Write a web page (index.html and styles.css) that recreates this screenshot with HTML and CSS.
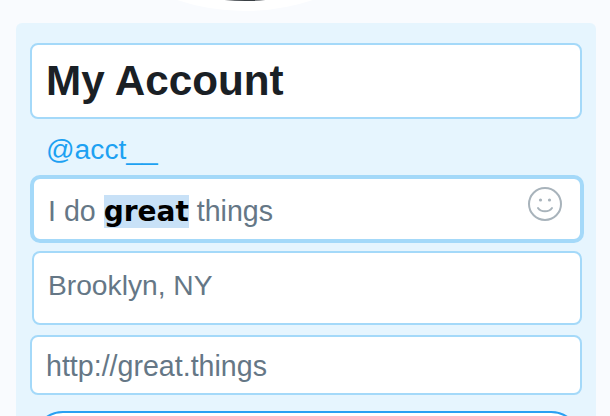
FILE: index.html
```html
<!DOCTYPE html>
<html lang="en">
<head>
  <meta charset="UTF-8">
  <meta name="viewport" content="width=device-width, initial-scale=1.0">
  <title>My Account</title>
  <link rel="stylesheet" href="styles.css">
</head>
<body>

<div class="avatar"></div>

<div class="panel">
  <div class="field title-field">My Account</div>
  <div class="handle">@acct__</div>
  <div class="field bio-field">
    <span>I do <span class="selected">great</span> things</span>
    <svg class="emoji" width="36" height="36" viewBox="0 0 36 36" fill="none" stroke="#a8b3bb" stroke-width="2">
      <circle cx="18" cy="18" r="16"></circle>
      <circle cx="13.5" cy="14" r="1.6" stroke="none" fill="#a8b3bb"></circle>
      <circle cx="22.5" cy="14" r="1.6" stroke="none" fill="#a8b3bb"></circle>
      <path d="M11 22c3 4.4 11 4.4 14 0" stroke-linecap="round"></path>
    </svg>
  </div>
  <div class="field location-field">Brooklyn, NY</div>
  <div class="field url-field">http://great.things</div>
  <button class="save-btn" type="button"></button>
</div>

</body>
</html>
```
FILE: styles.css
```css
html, body {
  height: 100%;
}
body {
  font-family: "Liberation Sans", Arial, sans-serif;
  font-size: 28px;
  background-color: #f9fbfe;
  margin: 0;
  padding: 0;
  overflow: hidden;
  position: relative;
}
.avatar {
  position: absolute;
  top: -419px;
  left: 30px;
  width: 430px;
  height: 430px;
  box-sizing: border-box;
  border: 10px solid #fff;
  border-radius: 50%;
  background-color: #3a3f44;
}
.panel {
  width: 552px;
  height: 373px;
  margin: 23px 0 0 16px;
  padding: 20px 14px 0;
  background-color: #e6f5fe;
  border-radius: 6px 6px 0 0;
}
.field {
  display: flex;
  align-items: center;
  box-sizing: border-box;
  background-color: #fff;
  border: 2px solid #a4d9f9;
  border-radius: 8px;
  color: #657786;
}
.title-field {
  height: 76px;
  padding-left: 14px;
  font-size: 42.2px;
  font-weight: bold;
  color: #1a2025;
}
.handle {
  height: 56px;
  padding: 4px 0 0 16px;
  box-sizing: border-box;
  display: flex;
  align-items: center;
  font-size: 28.2px;
  color: #1da1f2;
}
.bio-field {
  position: relative;
  width: 554px;
  height: 68px;
  padding: 4px 0 0 14px;
  border-width: 4px;
  border-radius: 10px;
  font-size: 28.6px;
}
.selected {
  font-family: "DejaVu Sans", sans-serif;
  font-size: 28px;
  font-weight: bold;
  color: #000;
  background-color: #c8e1f7;
}
.emoji {
  position: absolute;
  top: 7px;
  right: 17px;
}
.location-field {
  width: 550px;
  height: 74px;
  margin: 8px 0 0 2px;
  padding: 0 0 6px 14px;
  font-size: 28.2px;
}
.url-field {
  height: 60px;
  margin-top: 10px;
  padding: 2px 0 0 14px;
  font-size: 28.6px;
}
.save-btn {
  display: block;
  width: 548px;
  height: 60px;
  margin: 16px 0 0 3px;
  background-color: #fff;
  border: 2px solid #2aa0f2;
  border-radius: 30px;
}
```
